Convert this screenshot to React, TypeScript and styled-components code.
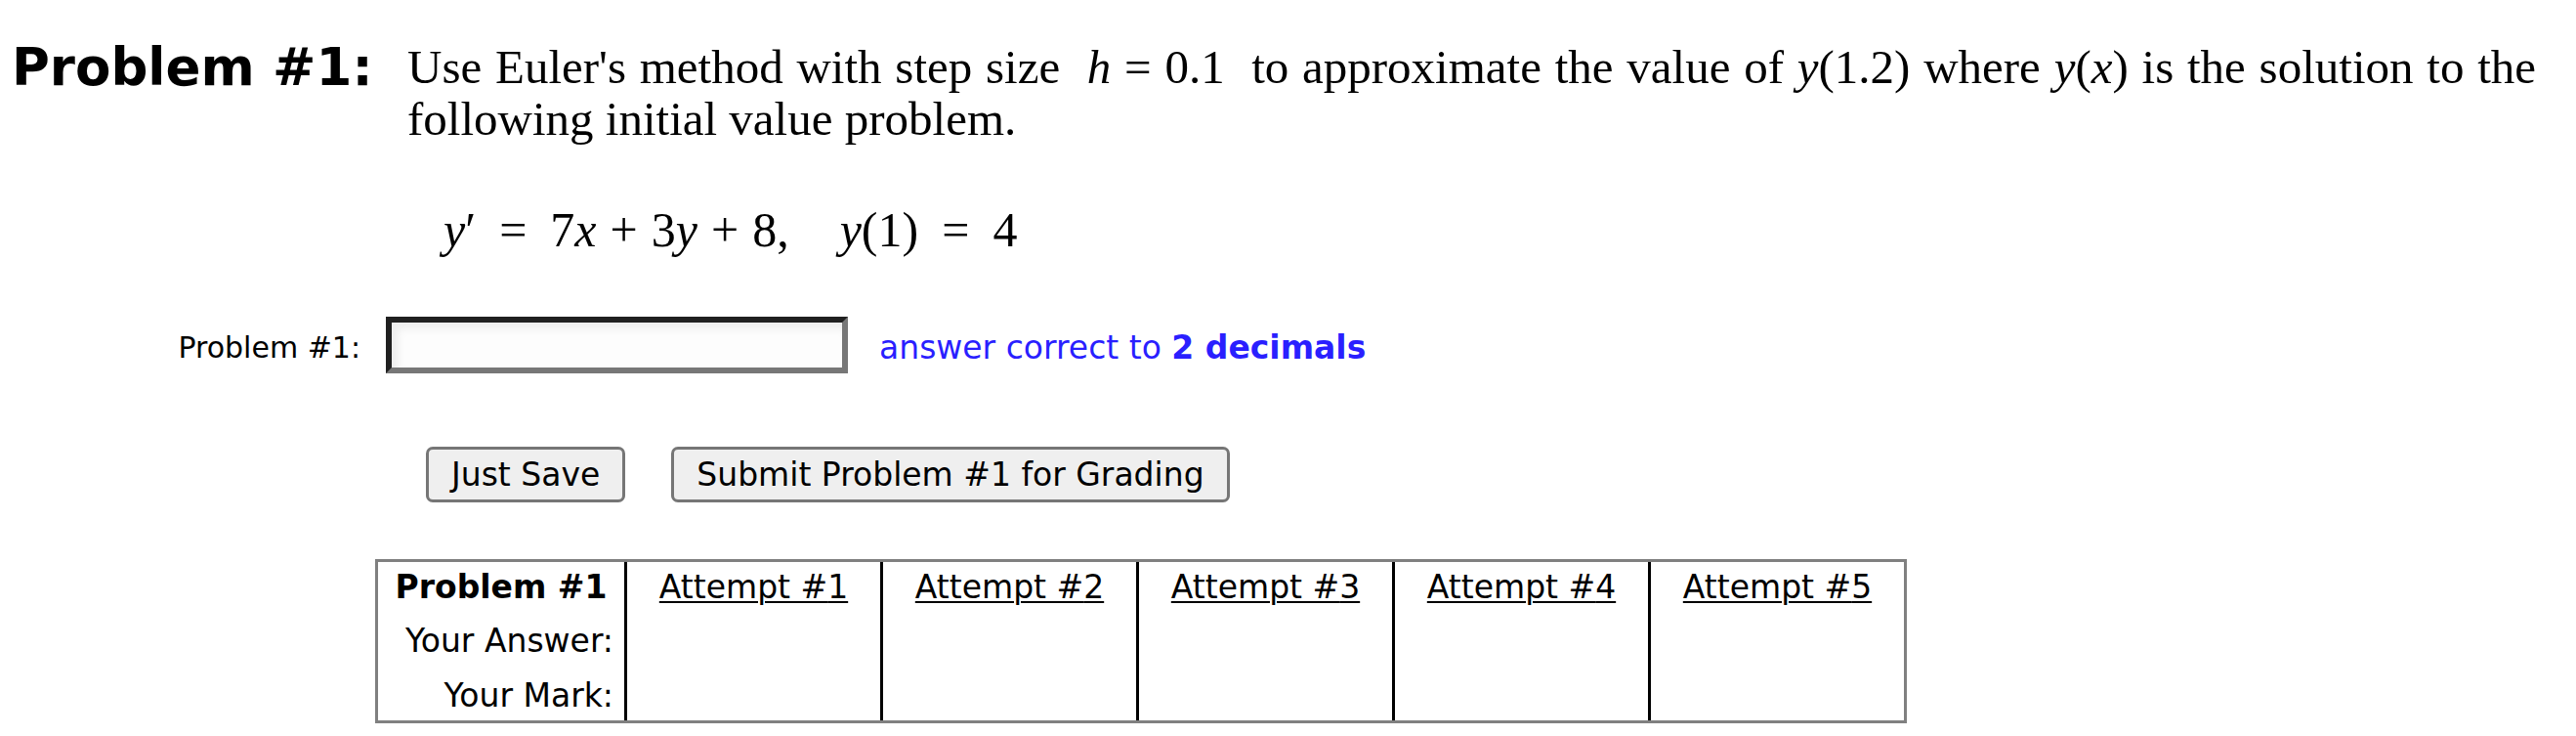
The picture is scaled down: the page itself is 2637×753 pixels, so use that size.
import styled, { createGlobalStyle } from 'styled-components'

const GlobalStyle = createGlobalStyle`
  html, body {
    margin: 0;
    padding: 0;
    background: #ffffff;
  }
  body {
    font-family: 'DejaVu Sans', Verdana, sans-serif;
    color: #000000;
  }
`

const attempts = [1, 2, 3, 4, 5]

const App = () => {
  return (
    <Page>
      <GlobalStyle />
      <ProblemRow>
        <Title>Problem #1:</Title>
        <Statement>
          <Paragraph>
            Use Euler's method with step size{' '}
            <Math>
              <I>h</I> = 0.1
            </Math>{' '}
            to approximate the value of <I>y</I>(1.2) where <I>y</I>(<I>x</I>) is the solution to the
            following initial value problem.
          </Paragraph>
          <Equation>
            <I>y</I>′<Rel>=</Rel>7<I>x</I>
            <Bin>+</Bin>3<I>y</I>
            <Bin>+</Bin>8,<Quad />
            <I>y</I>(1)<Rel>=</Rel>4
          </Equation>
        </Statement>
      </ProblemRow>

      <AnswerRow>
        <AnswerLabel>Problem #1:</AnswerLabel>
        <AnswerInput type='text' />
        <Hint>
          answer correct to <strong>2 decimals</strong>
        </Hint>
      </AnswerRow>

      <ButtonRow>
        <Button type='button'>Just Save</Button>
        <Button type='button'>Submit Problem #1 for Grading</Button>
      </ButtonRow>

      <AttemptTable>
        <Cell $align='center' $first>
          <strong>Problem #1</strong>
        </Cell>
        {attempts.map((n) => (
          <Cell key={`h${n}`} $align='center'>
            <AttemptLink href='#'>Attempt #{n}</AttemptLink>
          </Cell>
        ))}
        <Cell $align='right' $first>
          Your Answer:
        </Cell>
        {attempts.map((n) => (
          <Cell key={`a${n}`} />
        ))}
        <Cell $align='right' $first>
          Your Mark:
        </Cell>
        {attempts.map((n) => (
          <Cell key={`m${n}`} />
        ))}
      </AttemptTable>
    </Page>
  )
}

const Page = styled.div`
  padding-bottom: 12px;
`

const ProblemRow = styled.div`
  display: flex;
  align-items: flex-start;
`

const Title = styled.h1`
  flex: 0 0 417px;
  box-sizing: border-box;
  margin: 0;
  padding: 38px 0 0 12px;
  font-family: 'DejaVu Sans', Verdana, sans-serif;
  font-weight: bold;
  font-size: 53px;
  line-height: normal;
  white-space: nowrap;
`

const Statement = styled.div`
  width: 2179px;
  padding-top: 42px;
  font-family: 'Liberation Serif', 'Times New Roman', serif;
  font-size: 49px;
  line-height: 53px;
`

const Paragraph = styled.p`
  margin: 0;
  text-align: justify;
`

const I = styled.i`
  font-style: italic;
`

const Math = styled.span`
  padding: 0 0.28em;
`

const Equation = styled.div`
  margin: 61px 0 0 37px;
  font-size: 50px;
  white-space: nowrap;
`

const Rel = styled.span`
  margin: 0 24px;
`

const Bin = styled.span`
  margin: 0 14px;
`

const Quad = styled.span`
  display: inline-block;
  width: 52px;
`

const AnswerRow = styled.div`
  display: flex;
  align-items: center;
  margin-top: 62px;
`

const AnswerLabel = styled.span`
  box-sizing: border-box;
  width: 369px;
  padding-top: 4px;
  text-align: right;
  font-size: 30px;
`

const AnswerInput = styled.input`
  box-sizing: border-box;
  width: 473px;
  height: 58px;
  margin: 0 0 0 26px;
  padding: 0 8px;
  border-style: solid;
  border-width: 6px;
  border-color: #202020 #777777 #777777 #202020;
  background: #fdfdfd;
  box-shadow: inset 6px 6px 10px rgba(0, 0, 0, 0.07);
  font-size: 30px;
  outline: none;
`

const Hint = styled.span`
  margin-left: 32px;
  padding-top: 4px;
  color: #2a1fff;
  font-size: 33px;

  strong {
    font-weight: bold;
  }
`

const ButtonRow = styled.div`
  display: flex;
  gap: 47px;
  margin: 75px 0 0 436px;
`

const Button = styled.button`
  box-sizing: border-box;
  height: 57px;
  padding: 0 23px;
  border: 3px solid #767676;
  border-radius: 7px;
  background: #efefef;
  color: #000000;
  font-family: 'DejaVu Sans', Verdana, sans-serif;
  font-size: 33px;
  line-height: normal;
  cursor: pointer;
`

const AttemptTable = styled.div`
  display: grid;
  grid-template-columns: 252px repeat(5, 262px);
  grid-template-rows: 50px 60px 52px;
  width: max-content;
  margin: 58px 0 0 384px;
  border: 3px solid #808080;
  font-size: 33px;
`

const Cell = styled.div<{ $align?: 'left' | 'center' | 'right'; $first?: boolean }>`
  box-sizing: border-box;
  display: flex;
  align-items: center;
  justify-content: ${(props) =>
    props.$align === 'right' ? 'flex-end' : props.$align === 'center' ? 'center' : 'flex-start'};
  padding: 0 11px;
  border-left: ${(props) => (props.$first ? 'none' : '3px solid #000000')};
  white-space: nowrap;

  strong {
    font-weight: bold;
  }
`

const AttemptLink = styled.a`
  color: #000000;
  text-decoration: underline;
  text-decoration-thickness: 2px;
  text-underline-offset: 3px;
`

export default App
